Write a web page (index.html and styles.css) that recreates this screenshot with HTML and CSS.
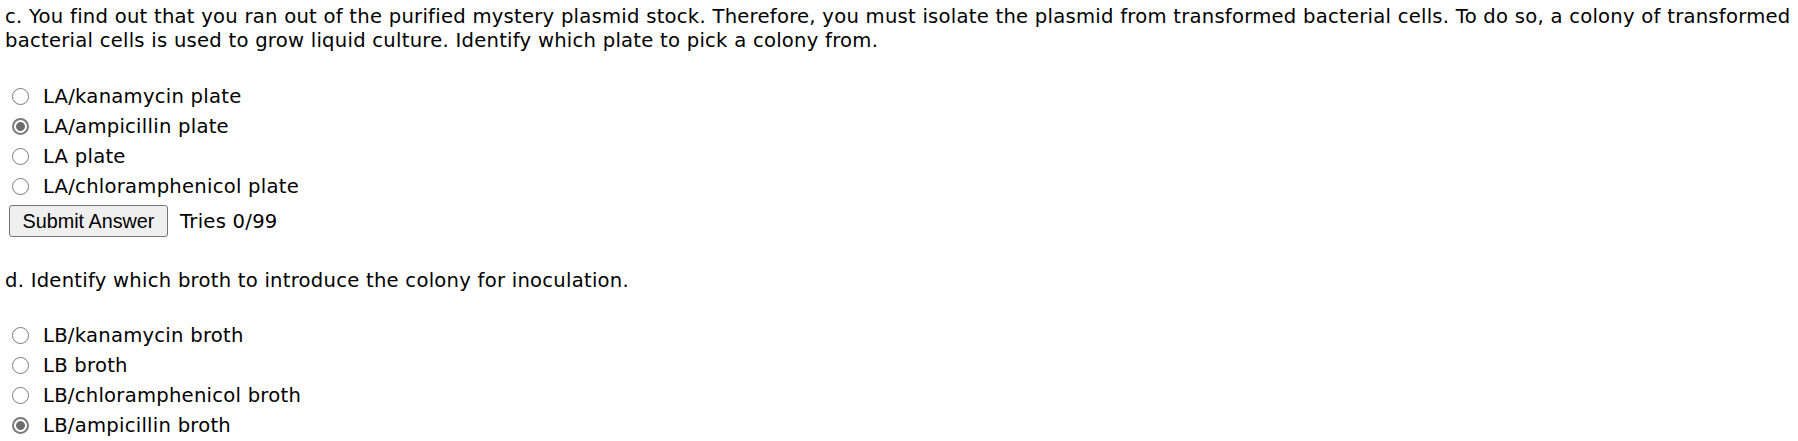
FILE: index.html
```html
<!DOCTYPE html>
<html lang="en">
<head>
<meta charset="utf-8">
<title>Question</title>
<link rel="stylesheet" href="styles.css">
</head>
<body>
<div class="page">
  <p class="question">c. You find out that you ran out of the purified mystery plasmid stock. Therefore, you must isolate the plasmid from transformed bacterial cells. To do so, a colony of transformed bacterial cells is used to grow liquid culture. Identify which plate to pick a colony from.</p>
  <div class="options opts-c">
    <label class="option"><input type="radio" name="c" class="radio"><span>LA/kanamycin plate</span></label>
    <label class="option"><input type="radio" name="c" class="radio" checked><span>LA/ampicillin plate</span></label>
    <label class="option"><input type="radio" name="c" class="radio"><span>LA plate</span></label>
    <label class="option"><input type="radio" name="c" class="radio"><span>LA/chloramphenicol plate</span></label>
  </div>
  <div class="submit-row">
    <button type="button" class="submit-btn">Submit Answer</button>
    <span class="tries">Tries 0/99</span>
  </div>
  <p class="question q-d">d. Identify which broth to introduce the colony for inoculation.</p>
  <div class="options opts-d">
    <label class="option"><input type="radio" name="d" class="radio"><span>LB/kanamycin broth</span></label>
    <label class="option"><input type="radio" name="d" class="radio"><span>LB broth</span></label>
    <label class="option"><input type="radio" name="d" class="radio"><span>LB/chloramphenicol broth</span></label>
    <label class="option"><input type="radio" name="d" class="radio" checked><span>LB/ampicillin broth</span></label>
  </div>
</div>
</body>
</html>
```
FILE: styles.css
```css
html, body {
  margin: 0;
  padding: 0;
  background: #ffffff;
}

body {
  font-family: "DejaVu Sans", Verdana, sans-serif;
  font-size: 19.6px;
  letter-spacing: 0.25px;
  color: #000000;
}

.page {
  padding: 5px 0 0 5px;
}

.question {
  margin: 0;
  line-height: 24px;
}

.options {
  display: flex;
  flex-direction: column;
}

.opts-c {
  margin-top: 28px;
}

.opts-d {
  margin-top: 27px;
}

.option {
  display: flex;
  align-items: center;
  height: 30px;
}

.radio {
  appearance: none;
  -webkit-appearance: none;
  box-sizing: border-box;
  width: 17px;
  height: 17px;
  margin: 0 14px 0 7px;
  border: 1px solid #7a7a7a;
  border-radius: 50%;
  background: #ffffff;
  flex: none;
}

.radio:checked {
  border: 2px solid #7a7a7a;
  background: radial-gradient(circle, #6d6d6d 0, #6d6d6d 4px, #ffffff 4.8px);
}

.submit-row {
  display: flex;
  align-items: center;
  margin-top: 4px;
  height: 32px;
  letter-spacing: 0;
}

.submit-btn {
  font-family: "Liberation Sans", Arial, sans-serif;
  font-size: 19.8px;
  letter-spacing: 0;
  color: #000000;
  background: #efefef;
  border: 1px solid #767676;
  border-radius: 3px;
  height: 32px;
  width: 159px;
  padding: 0;
  margin-left: 4px;
}

.tries {
  margin-left: 12px;
  letter-spacing: 0.25px;
}

.q-d {
  margin-top: 32px;
}
```
